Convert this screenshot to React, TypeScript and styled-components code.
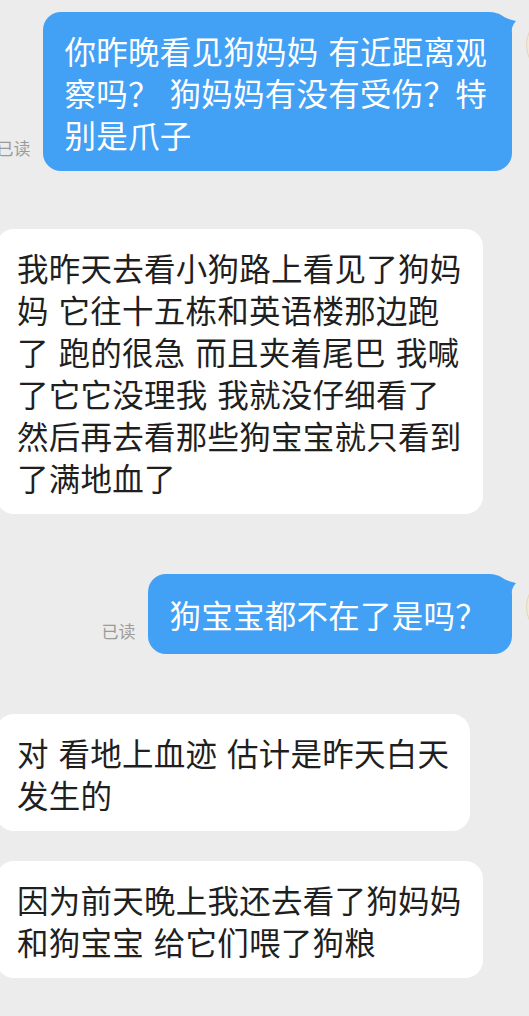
import React from "react";
import styled, { createGlobalStyle } from "styled-components";

interface IMessage {
  id: number;
  mine: boolean;
  read?: boolean;
  gap: number;
  lines: string[];
}

const messages: IMessage[] = [
  {
    id: 1,
    mine: true,
    read: true,
    gap: 0,
    lines: ["你昨晚看见狗妈妈 有近距离观", "察吗？ 狗妈妈有没有受伤？特", "别是爪子"],
  },
  {
    id: 2,
    mine: false,
    gap: 58,
    lines: [
      "我昨天去看小狗路上看见了狗妈",
      "妈 它往十五栋和英语楼那边跑",
      "了 跑的很急 而且夹着尾巴 我喊",
      "了它它没理我 我就没仔细看了",
      "然后再去看那些狗宝宝就只看到",
      "了满地血了",
    ],
  },
  { id: 3, mine: true, read: true, gap: 60, lines: ["狗宝宝都不在了是吗？"] },
  { id: 4, mine: false, gap: 60, lines: ["对 看地上血迹 估计是昨天白天", "发生的"] },
  { id: 5, mine: false, gap: 30, lines: ["因为前天晚上我还去看了狗妈妈", "和狗宝宝 给它们喂了狗粮"] },
];

const GlobalStyle = createGlobalStyle`
  html, body {
    margin: 0;
    padding: 0;
    background: #ececec;
  }
  * {
    box-sizing: border-box;
  }
`;

const Page = styled.div`
  width: 100%;
  min-height: 100vh;
  overflow: hidden;
  padding-top: 12px;
  background: #ececec;
  font-family: "Noto Sans CJK SC", "Noto Sans", sans-serif;
`;

const Row = styled.div<{ $mine: boolean; $gap: number }>`
  display: flex;
  justify-content: ${(p) => (p.$mine ? "flex-end" : "flex-start")};
  margin-top: ${(p) => p.$gap}px;
  margin-right: ${(p) => (p.$mine ? "-61px" : "0")};
  margin-left: ${(p) => (p.$mine ? "0" : "-4px")};
`;

const ReadMark = styled.span`
  align-self: flex-end;
  flex-shrink: 0;
  margin: 0 13px 13px 0;
  font-size: 17px;
  line-height: 20px;
  color: #9b9b9b;
  white-space: nowrap;
`;

const Bubble = styled.div<{ $mine: boolean }>`
  position: relative;
  display: flex;
  flex-direction: column;
  justify-content: center;
  min-height: 80px;
  padding: 16.5px ${(p) => (p.$mine ? "25px 16.5px 21px" : "21px")};
  border-radius: ${(p) => (p.$mine ? "18px 22px 18px 18px" : "18px")};
  background: ${(p) => (p.$mine ? "#42a0f5" : "#ffffff")};
  color: ${(p) => (p.$mine ? "#ffffff" : "#1f1f1f")};
  font-size: 31.5px;
  line-height: 42px;
  letter-spacing: 0.25px;
  word-spacing: 2.5px;
`;

const Line = styled.span`
  display: block;
  white-space: pre;
`;

const Tail = styled.svg`
  position: absolute;
  top: 0;
  right: -5px;
  width: 20px;
  height: 26px;
`;

const Avatar = styled.div`
  flex-shrink: 0;
  align-self: flex-start;
  width: 64px;
  height: 64px;
  margin: 1px 0 0 14px;
  border-radius: 50%;
  background: #f3ead9;
  border: 1px solid #e2d5bd;
`;

const App = () => {
  return (
    <>
      <GlobalStyle />
      <Page>
        {messages.map((m) => (
          <Row key={m.id} $mine={m.mine} $gap={m.gap}>
            {m.read && <ReadMark>已读</ReadMark>}
            <Bubble $mine={m.mine}>
              {m.lines.map((line, i) => (
                <Line key={i}>{line}</Line>
              ))}
              {m.mine && (
                <Tail viewBox="0 0 20 26">
                  <path d="M1 1.5 Q9 7 19 9 Q14 14 14 24 L1 24 Z" fill="#42a0f5" />
                </Tail>
              )}
            </Bubble>
            {m.mine && <Avatar />}
          </Row>
        ))}
      </Page>
    </>
  );
};

export default App;
